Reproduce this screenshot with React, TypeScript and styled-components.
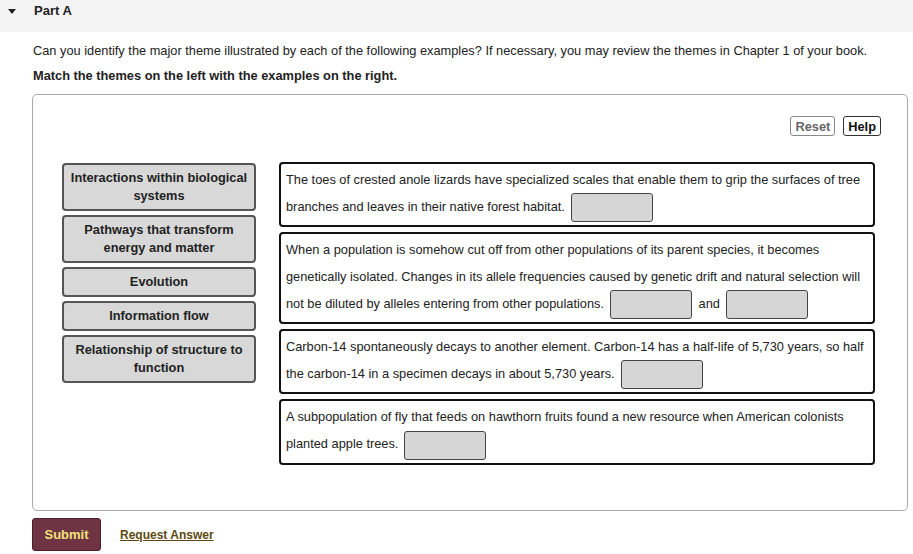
import styled, { createGlobalStyle } from 'styled-components'

const GlobalStyle = createGlobalStyle`
  body {
    margin: 0;
    background: #fff;
    font-family: "Liberation Sans", Arial, sans-serif;
    color: #222;
  }
`

const Header = styled.div`
  height: 28px;
  background: #f4f4f4;
  display: flex;
  align-items: flex-start;
  gap: 10px;
  padding: 4px 0 0 8px;

  .header__caret{
    width: 0;
    height: 0;
    border-left: 4px solid transparent;
    border-right: 4px solid transparent;
    border-top: 5px solid #222;
    margin: 5px 8px 0 0;
  }

  .header__title{
    font-weight: 700;
    font-size: 13px;
    line-height: 14px;
    color: #222;
  }
`

const Body = styled.div`
  padding: 6px 5px 0 32px;
`

const Prompt = styled.p<{ bold?: boolean }>`
  margin: 0;
  font-size: 12.8px;
  line-height: 25px;
  padding-left: 1px;
  font-weight: ${p => (p.bold ? 700 : 400)};
  color: #222;
`

const Panel = styled.div`
  margin-top: 6px;
  border: 1px solid #aaa;
  border-radius: 5px;
  padding: 21px 26px 47px 29px;
  height: 417px;
  box-sizing: border-box;
`

const Toolbar = styled.div`
  display: flex;
  justify-content: flex-end;
  gap: 8px;
  height: 20px;
`

const ToolButton = styled.button<{ strong?: boolean }>`
  font-family: "Liberation Sans", Arial, sans-serif;
  font-weight: 700;
  font-size: 12.8px;
  height: 20px;
  padding: 0 4px;
  background: #fff;
  border: 1px solid ${p => (p.strong ? '#333' : '#888')};
  border-radius: 3px;
  color: ${p => (p.strong ? '#111' : '#666')};
`

const Match = styled.div`
  display: grid;
  grid-template-columns: 194px 1fr;
  align-items: start;
  gap: 23px;
  margin-top: 26px;
  padding-right: 6px;
`

const Themes = styled.div`
  display: flex;
  flex-direction: column;
  gap: 4px;
  padding-top: 1px;
`

const Theme = styled.div`
  background: #d8d8d8;
  border: 2px solid #555;
  border-radius: 4px;
  padding: 4px 6px;
  font-size: 12.8px;
  font-weight: 700;
  line-height: 18px;
  text-align: center;
  color: #222;
`

const Examples = styled.div`
  display: flex;
  flex-direction: column;
  gap: 5px;
`

const Example = styled.div`
  border: 2px solid #111;
  border-radius: 4px;
  padding: 2px 5px 3px;
  font-size: 12.8px;
  line-height: 27px;
  color: #222;
`

const Drop = styled.span`
  display: inline-block;
  width: 80px;
  height: 27px;
  background: #d6d6d6;
  border: 1.5px solid #444;
  border-radius: 3px;
  vertical-align: middle;
  margin: 0 3px 0 6px;
`

const Footer = styled.div`
  display: flex;
  align-items: center;
  gap: 19px;
  margin-top: 7px;
`

const Submit = styled.button`
  width: 69px;
  height: 33px;
  background: #6e3444;
  border: 1px solid #4a1f2a;
  border-radius: 3px;
  color: #f2e27a;
  font-family: "Liberation Sans", Arial, sans-serif;
  font-weight: 700;
  font-size: 13px;
`

const Link = styled.a`
  font-size: 12px;
  font-weight: 700;
  color: #5c4a12;
  text-decoration: underline;
`

const themes = [
  'Interactions within biological systems',
  'Pathways that transform energy and matter',
  'Evolution',
  'Information flow',
  'Relationship of structure to function',
]

export default function App() {
  return (
    <>
      <GlobalStyle />
      <Header>
        <span className="header__caret"></span>
        <span className="header__title">Part A</span>
      </Header>
      <Body>
        <Prompt>
          Can you identify the major theme illustrated by each of the following examples? If necessary, you may review the themes in Chapter 1 of your book.
        </Prompt>
        <Prompt bold>Match the themes on the left with the examples on the right.</Prompt>
        <Panel>
          <Toolbar>
            <ToolButton>Reset</ToolButton>
            <ToolButton strong>Help</ToolButton>
          </Toolbar>
          <Match>
            <Themes>
              {themes.map(t => (
                <Theme key={t}>{t}</Theme>
              ))}
            </Themes>
            <Examples>
              <Example>
                The toes of crested anole lizards have specialized scales that enable them to grip the surfaces of tree
                branches and leaves in their native forest habitat.<Drop />
              </Example>
              <Example>
                When a population is somehow cut off from other populations of its parent species, it becomes
                genetically isolated. Changes in its allele frequencies caused by genetic drift and natural selection will
                not be diluted by alleles entering from other populations.<Drop /> and<Drop />
              </Example>
              <Example>
                Carbon-14 spontaneously decays to another element. Carbon-14 has a half-life of 5,730 years, so half
                the carbon-14 in a specimen decays in about 5,730 years.<Drop />
              </Example>
              <Example>
                A subpopulation of fly that feeds on hawthorn fruits found a new resource when American colonists
                planted apple trees.<Drop />
              </Example>
            </Examples>
          </Match>
        </Panel>
        <Footer>
          <Submit>Submit</Submit>
          <Link href="#">Request Answer</Link>
        </Footer>
      </Body>
    </>
  )
}
